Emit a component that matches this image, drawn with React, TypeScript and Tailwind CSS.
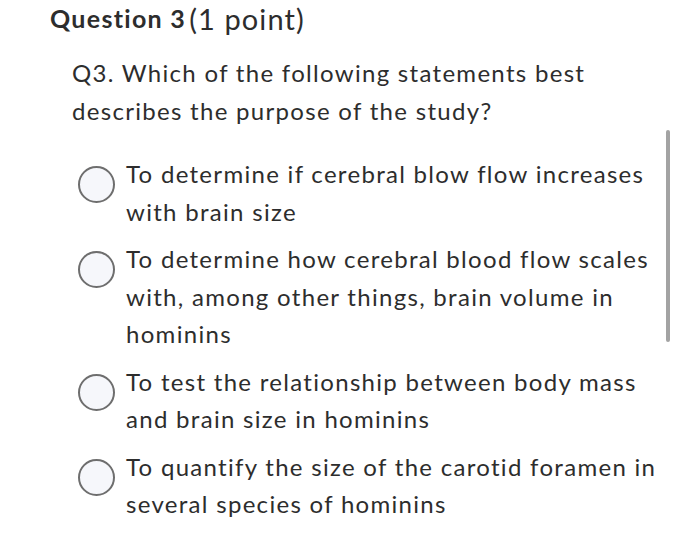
import React from "react";

const options = [
  "To determine if cerebral blow flow increases with brain size",
  "To determine how cerebral blood flow scales with, among other things, brain volume in hominins",
  "To test the relationship between body mass and brain size in hominins",
  "To quantify the size of the carotid foramen in several species of hominins",
];

export default function App() {
  return (
    <div
      className="relative w-[700px] h-[551px] bg-white text-[#2d2d2d] overflow-hidden [font-variant-ligatures:none]"
      style={{ fontFamily: "Lato, 'Open Sans', sans-serif" }}
    >
      <div className="pl-[50px] pt-[3px] h-[33px] text-[25px] leading-[30px] tracking-[1.3px] whitespace-nowrap">
        <span className="font-bold">Question 3</span>
        <span className="ml-[3px] text-[29px] leading-[30px] align-[-2px] tracking-[1.1px]">(1 point)</span>
      </div>
      <div className="pl-[72px] pt-[21px] max-w-[640px] text-[24px] leading-[37.5px] tracking-[1.3px]">
        Q3. Which of the following statements best describes the purpose of the study?
      </div>
      <div className="pl-[78px] pt-[26px] flex flex-col gap-[10px]">
        {options.map((o, i) => (
          <div key={i} className="flex items-start">
            <div className="mt-[11px] w-[37px] h-[37px] shrink-0 rounded-full border-[2px] border-[#6e6e6e] bg-[#f6f7fb]" />
            <div className="ml-[11px] text-[24px] leading-[37.5px] tracking-[1.3px] max-w-[545px]">
              {o}
            </div>
          </div>
        ))}
      </div>
      <div className="absolute left-[666px] top-[130px] w-[4px] h-[212px] rounded-full bg-[#a3a3a3]" />
    </div>
  );
}
